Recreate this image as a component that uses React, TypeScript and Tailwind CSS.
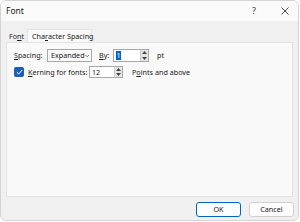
import React from "react";

const U = ({ children }: { children: React.ReactNode }) => <span className="underline underline-offset-1">{children}</span>;

function Spinner() {
  return (
    <div className="flex flex-col w-[8px] h-full border-l border-[#c8c8c8] bg-[#e6e6e6] shrink-0">
      <div className="flex-1 flex items-center justify-center">
        <svg width="5" height="3" viewBox="0 0 5 3"><path d="M0 3 L2.5 0 L5 3Z" fill="#444" /></svg>
      </div>
      <div className="flex-1 flex items-center justify-center">
        <svg width="5" height="3" viewBox="0 0 5 3"><path d="M0 0 L2.5 3 L5 0Z" fill="#444" /></svg>
      </div>
    </div>
  );
}

export default function App() {
  return (
    <div className="w-[300px] h-[222px] bg-white overflow-hidden" style={{ fontFamily: '"Noto Sans", "Open Sans", sans-serif' }}>
      <div className="w-[299px] h-[221px] bg-[#f0f0f0] rounded-[6px] border border-[#d4d4d4] flex flex-col text-[7.2px] text-[#1a1a1a] overflow-hidden whitespace-nowrap">
        <div className="h-[20px] bg-[#fafafa] flex items-center pl-[5px] pr-[9px] shrink-0">
          <span className="text-[8.5px] text-[#222]">Font</span>
          <div className="flex-1" />
          <span className="text-[9px] text-[#444] mr-[25px]">?</span>
          <svg width="8" height="8" viewBox="0 0 8 8"><path d="M0.5 0.5 L7.5 7.5 M7.5 0.5 L0.5 7.5" stroke="#333" strokeWidth="0.9" /></svg>
        </div>
        <div className="flex items-end pl-[8px] mt-[8px] h-[13px] shrink-0">
          <div className="h-[12px] flex items-center w-[18px]">Fo<U>n</U>t</div>
          <div className="h-[13px] w-[65px] pl-[4px] bg-[#f9f9f9] border-t border-x border-[#e2e2e2] flex items-center">Cha<U>r</U>acter Spacing</div>
        </div>
        <div className="mx-[5px] h-[155px] bg-[#f9f9f9] border border-[#e2e2e2] shrink-0 pl-[7px] pt-[6px]">
          <div className="flex items-center h-[13px]">
            <span className="w-[33px] shrink-0"><U>S</U>pacing:</span>
            <div className="w-[45px] h-[13px] shrink-0 bg-[#f9f9f9] border border-[#a8a8a8] flex items-center pl-[3px] pr-[2px]">
              <span className="flex-1">Expanded</span>
              <svg width="6" height="4" viewBox="0 0 6 4"><path d="M0.5 0.5 L3 3 L5.5 0.5" stroke="#444" strokeWidth="1" fill="none" /></svg>
            </div>
            <span className="ml-[7px] w-[14px] shrink-0"><U>B</U>y:</span>
            <div className="w-[36px] h-[13px] shrink-0 bg-white border border-[#a8a8a8] flex items-center">
              <div className="flex-1 pl-[2px] flex items-center"><span className="bg-[#0064c8] text-white leading-[9px] px-[0.5px]">1</span></div>
              <Spinner />
            </div>
            <span className="ml-[8px]">pt</span>
          </div>
          <div className="flex items-center h-[12px] mt-[4px]">
            <div className="w-[10px] h-[10px] shrink-0 rounded-[2px] bg-[#1d5fb4] flex items-center justify-center">
              <svg width="7" height="6" viewBox="0 0 7 6"><path d="M0.8 3.2 L2.7 5 L6.2 1" stroke="white" strokeWidth="1" fill="none" /></svg>
            </div>
            <span className="ml-[4px] w-[61px] shrink-0"><U>K</U>erning for fonts:</span>
            <div className="w-[34px] h-[12px] shrink-0 bg-white border border-[#a8a8a8] flex items-center">
              <span className="flex-1 pl-[2px]">12</span>
              <Spinner />
            </div>
            <span className="ml-[9px]">P<U>o</U>ints and above</span>
          </div>
        </div>
        <div className="flex justify-end gap-[8px] pr-[4px] mt-[5px]">
          <button className="w-[45px] h-[15px] bg-[#fdfdfd] border border-[#0067c0] rounded-[3px] text-[7.2px]">OK</button>
          <button className="w-[45px] h-[15px] bg-[#fdfdfd] border border-[#d0d0d0] rounded-[3px] text-[7.2px]">Cancel</button>
        </div>
      </div>
    </div>
  );
}
